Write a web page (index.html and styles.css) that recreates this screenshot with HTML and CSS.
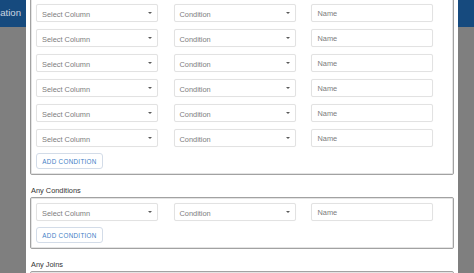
FILE: index.html
```html
<!DOCTYPE html>
<html>
<head>
<meta charset="utf-8">
<link rel="stylesheet" href="styles.css">
</head>
<body>
<div class="screen">
  <div class="side side-left">
    <div class="appbar"><span class="appbar-title">Organisation</span></div>
    <div class="backdrop"></div>
  </div>
  <div class="modal">
    <fieldset class="group group-first">
      <div class="rows">
        <div class="select"><span class="ph">Select Column</span><span class="caret"></span></div>
        <div class="select"><span class="ph">Condition</span><span class="caret"></span></div>
        <div class="input"><span class="ph-name">Name</span></div>
        <div class="select"><span class="ph">Select Column</span><span class="caret"></span></div>
        <div class="select"><span class="ph">Condition</span><span class="caret"></span></div>
        <div class="input"><span class="ph-name">Name</span></div>
        <div class="select"><span class="ph">Select Column</span><span class="caret"></span></div>
        <div class="select"><span class="ph">Condition</span><span class="caret"></span></div>
        <div class="input"><span class="ph-name">Name</span></div>
        <div class="select"><span class="ph">Select Column</span><span class="caret"></span></div>
        <div class="select"><span class="ph">Condition</span><span class="caret"></span></div>
        <div class="input"><span class="ph-name">Name</span></div>
        <div class="select"><span class="ph">Select Column</span><span class="caret"></span></div>
        <div class="select"><span class="ph">Condition</span><span class="caret"></span></div>
        <div class="input"><span class="ph-name">Name</span></div>
        <div class="select"><span class="ph">Select Column</span><span class="caret"></span></div>
        <div class="select"><span class="ph">Condition</span><span class="caret"></span></div>
        <div class="input"><span class="ph-name">Name</span></div>
      </div>
      <button class="add-btn">ADD CONDITION</button>
    </fieldset>
    <div class="section-label">Any Conditions</div>
    <fieldset class="group">
      <div class="rows">
        <div class="select"><span class="ph">Select Column</span><span class="caret"></span></div>
        <div class="select"><span class="ph">Condition</span><span class="caret"></span></div>
        <div class="input"><span class="ph-name">Name</span></div>
      </div>
      <button class="add-btn">ADD CONDITION</button>
    </fieldset>
    <div class="section-label">Any Joins</div>
    <fieldset class="group group-last"></fieldset>
  </div>
  <div class="side side-right">
    <div class="appbar"></div>
    <div class="backdrop"></div>
  </div>
</div>
</body>
</html>
```

FILE: styles.css
```css
html, body {
  margin: 0;
  padding: 0;
  background: #ffffff;
}

body {
  width: 474px;
  height: 273px;
  overflow: hidden;
  font-family: "Liberation Sans", Arial, sans-serif;
}

.screen {
  display: flex;
  width: 474px;
  height: 273px;
  overflow: hidden;
}

.side {
  display: flex;
  flex-direction: column;
  flex-shrink: 0;
}

.side-left {
  width: 26px;
}

.side-right {
  width: 16px;
}

.appbar {
  height: 27px;
  background: #164a7e;
  display: flex;
  align-items: center;
  justify-content: flex-end;
  overflow: hidden;
  flex-shrink: 0;
}

.appbar-title {
  color: #cdd6e0;
  font-size: 9.6px;
  white-space: nowrap;
  padding-right: 5px;
  margin-top: -3px;
}

.backdrop {
  flex: 1;
  background: #7f7f7f;
}

.modal {
  width: 432px;
  flex-shrink: 0;
  background: #ffffff;
  padding: 0 4px;
  box-sizing: border-box;
  overflow: hidden;
}

.group {
  margin: 0;
  padding: 5px 0 5px 4px;
  border: 1px solid #a2a2a2;
  border-radius: 2px;
  box-shadow: inset 0 0 0 1px #e4e4e4;
  min-width: 0;
}

.group-first {
  margin-top: -2px;
}

.group-last {
  height: 40px;
}

.rows {
  display: grid;
  grid-template-columns: repeat(3, 122px);
  column-gap: 15.5px;
  row-gap: 7px;
  margin-left: 1px;
}

.select,
.input {
  position: relative;
  height: 18px;
  box-sizing: border-box;
  border: 1px solid #e2e2e2;
  border-radius: 2px;
  background: #ffffff;
  box-shadow: 0 0 1px rgba(0, 0, 0, 0.06);
  font-size: 7.4px;
  color: #7d7d7d;
  display: flex;
  padding-left: 5px;
}

.select {
  align-items: flex-end;
  padding-bottom: 2px;
}

.input {
  align-items: center;
  padding-left: 5.5px;
}

.ph,
.ph-name {
  line-height: 9px;
  white-space: nowrap;
}

.caret {
  position: absolute;
  right: 5px;
  top: 7px;
  width: 0;
  height: 0;
  border-left: 2.5px solid transparent;
  border-right: 2.5px solid transparent;
  border-top: 2.5px solid #5a5a5a;
}

.add-btn {
  display: block;
  margin: 6px 0 0 1px;
  height: 16px;
  width: 67px;
  padding: 0;
  box-sizing: border-box;
  border: 1px solid #d3dce8;
  border-radius: 3px;
  background: #ffffff;
  color: #3f7fc6;
  font-family: "Liberation Sans", Arial, sans-serif;
  font-size: 6.3px;
  letter-spacing: 0.3px;
  text-align: center;
}

.section-label {
  margin-top: 10px;
  height: 12px;
  line-height: 12px;
  font-size: 7.4px;
  color: #333333;
  padding-left: 1px;
}
```
